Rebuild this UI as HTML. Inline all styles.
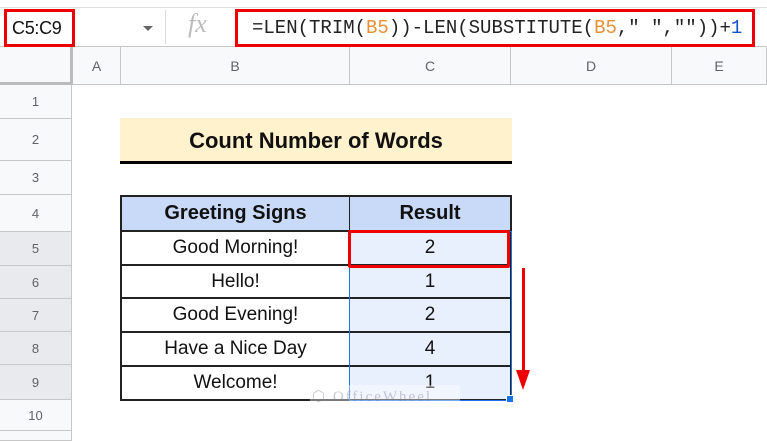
<!DOCTYPE html>
<html><head><style>
body{margin:0;width:767px;height:437px;overflow:hidden;background:#fff;font-family:"Liberation Sans",Arial,sans-serif;position:relative}
.a{position:absolute;box-sizing:border-box}
.rh{position:absolute;left:0;width:72px;background:#f8f9fa;border-bottom:1px solid #c7c7c7;border-right:1px solid #c7c7c7;color:#5f6368;font-size:13px;display:flex;align-items:center;justify-content:center;box-sizing:border-box}
.sel{background:#e8eaed}
.ch{position:absolute;top:47px;height:38px;background:#f8f9fa;border-right:1px solid #c7c7c7;border-bottom:1px solid #c7c7c7;color:#5f6368;font-size:14px;display:flex;align-items:center;justify-content:center;box-sizing:border-box}
.c{position:absolute;box-sizing:border-box;display:flex;align-items:center;justify-content:center;font-size:19px;color:#111}
</style></head><body>
<div class="a" style="left:0;width:767px;background:#fff;border-bottom:1px solid #c7c7c7;border-top:1px solid #e0e0e0;top:7px;height:40px"></div>
<div class="a" style="left:4px;top:9px;width:71px;height:38px;border:3px solid #e00;font-size:18px;display:flex;align-items:center;padding-left:5px;color:#111;letter-spacing:-0.3px">C5:C9</div>
<div class="a" style="left:143px;top:26px;width:0;height:0;border-left:5px solid transparent;border-right:5px solid transparent;border-top:5px solid #666"></div>
<div class="a" style="left:165px;top:10px;width:1px;height:34px;background:#ddd"></div>
<div class="a" style="left:188px;top:9px;font-family:'Liberation Serif',serif;font-style:italic;font-size:26px;color:#bbb">fx</div>
<div class="a" style="left:235px;top:9px;width:520px;height:38px;border:3px solid #e00;font-family:'Liberation Mono',monospace;font-size:19px;display:flex;align-items:center;padding-left:14px;letter-spacing:0;color:#222;white-space:nowrap;overflow:hidden">=LEN(TRIM(<span style="color:#e69138">B5</span>))-LEN(SUBSTITUTE(<span style="color:#e69138">B5</span>,"&nbsp;",""))+<span style="color:#1155cc">1</span></div>
<div class="ch" style="left:0;width:73px;border-right:3px solid #bbb;border-bottom:3px solid #bbb"></div>
<div class="ch" style="left:73px;width:48px">A</div>
<div class="ch" style="left:121px;width:229px">B</div>
<div class="ch sel" style="left:350px;width:161px">C</div>
<div class="ch" style="left:511px;width:161px">D</div>
<div class="ch" style="left:672px;width:95px">E</div>
<div class="rh" style="top:85px;height:34px">1</div>
<div class="rh" style="top:119px;height:42px">2</div>
<div class="rh" style="top:161px;height:34px">3</div>
<div class="rh" style="top:195px;height:37px">4</div>
<div class="rh sel" style="top:232px;height:34px">5</div>
<div class="rh sel" style="top:266px;height:33px">6</div>
<div class="rh sel" style="top:299px;height:33px">7</div>
<div class="rh sel" style="top:332px;height:33px">8</div>
<div class="rh sel" style="top:365px;height:35px">9</div>
<div class="rh" style="top:400px;height:31px">10</div>
<div class="rh" style="top:431px;height:10px"></div>
<div class="c" style="left:120px;top:118px;width:392px;height:46px;background:#fff2cc;border-bottom:3px solid #000;font-weight:bold;font-size:22px;padding-top:2px">Count Number of Words</div>
<div class="a" style="left:120px;top:195px;width:392px;height:206px;border:2px solid #222"></div>
<div class="c" style="left:122px;top:197px;width:228px;height:35px;background:#c9daf8;font-weight:bold;font-size:20px;border-right:1px solid #222;border-bottom:2px solid #222">Greeting Signs</div>
<div class="c" style="left:350px;top:197px;width:160px;height:35px;background:#c9daf8;font-weight:bold;font-size:20px;border-bottom:2px solid #222">Result</div>
<div class="c" style="left:122px;top:232px;width:228px;height:34px;border-right:1px solid #222;border-bottom:2px solid #222">Good Morning!</div>
<div class="c" style="left:122px;top:266px;width:228px;height:33px;border-right:1px solid #222;border-bottom:2px solid #222">Hello!</div>
<div class="c" style="left:122px;top:299px;width:228px;height:34px;border-right:1px solid #222;border-bottom:2px solid #222">Good Evening!</div>
<div class="c" style="left:122px;top:333px;width:228px;height:34px;border-right:1px solid #222;border-bottom:2px solid #222">Have a Nice Day</div>
<div class="c" style="left:122px;top:367px;width:228px;height:32px;border-right:1px solid #222">Welcome!</div>
<div class="c" style="left:350px;top:232px;width:160px;height:34px;background:#e8f0fe;border-bottom:2px solid #222">2</div>
<div class="c" style="left:350px;top:266px;width:160px;height:33px;background:#e8f0fe;border-bottom:2px solid #222">1</div>
<div class="c" style="left:350px;top:299px;width:160px;height:34px;background:#e8f0fe;border-bottom:2px solid #222">2</div>
<div class="c" style="left:350px;top:333px;width:160px;height:34px;background:#e8f0fe;border-bottom:2px solid #222">4</div>
<div class="c" style="left:350px;top:367px;width:160px;height:32px;background:#e8f0fe">1</div>
<div class="a" style="left:349px;top:231px;width:163px;height:170px;border:1.5px solid #1a73e8"></div>
<div class="a" style="left:506px;top:395px;width:8px;height:8px;background:#1a73e8;border:1px solid #fff"></div>
<div class="a" style="left:348px;top:230px;width:162px;height:38px;border:3px solid #e00;border-radius:2px"></div>
<div class="a" style="left:522px;top:268px;width:3px;height:105px;background:#e00"></div>
<div class="a" style="left:516px;top:370px;width:0;height:0;border-left:7px solid transparent;border-right:7px solid transparent;border-top:20px solid #e00"></div>
<div class="a" style="left:310px;top:385px;width:150px;height:26px;background:rgba(255,255,255,0.4)"></div>
<div class="a" style="left:312px;top:387px;font-family:'Liberation Serif',serif;font-size:15px;letter-spacing:2px;color:rgba(120,120,140,0.4)">⬡ OfficeWheel</div>
</body></html>
